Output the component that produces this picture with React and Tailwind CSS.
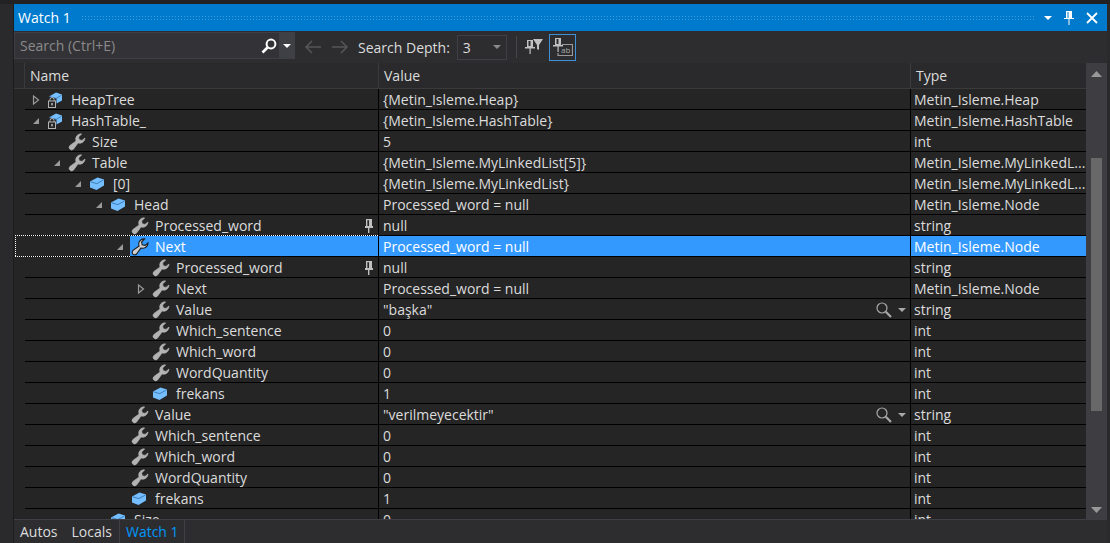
import React from 'react';

const rows = [
    { name: 'HeapTree', value: '{Metin_Isleme.Heap}', type: 'Metin_Isleme.Heap', depth: 0, icon: 'locked', arrow: 'closed' },
    { name: 'HashTable_', value: '{Metin_Isleme.HashTable}', type: 'Metin_Isleme.HashTable', depth: 0, icon: 'locked', arrow: 'open' },
    { name: 'Size', value: '5', type: 'int', depth: 1, icon: 'wrench' },
    { name: 'Table', value: '{Metin_Isleme.MyLinkedList[5]}', type: 'Metin_Isleme.MyLinkedL...', depth: 1, icon: 'wrench', arrow: 'open' },
    { name: '[0]', value: '{Metin_Isleme.MyLinkedList}', type: 'Metin_Isleme.MyLinkedL...', depth: 2, icon: 'cube', arrow: 'open' },
    { name: 'Head', value: 'Processed_word = null', type: 'Metin_Isleme.Node', depth: 3, icon: 'cube', arrow: 'open' },
    { name: 'Processed_word', value: 'null', type: 'string', depth: 4, icon: 'wrench', pin: true },
    { name: 'Next', value: 'Processed_word = null', type: 'Metin_Isleme.Node', depth: 4, icon: 'wrench', arrow: 'open', selected: true },
    { name: 'Processed_word', value: 'null', type: 'string', depth: 5, icon: 'wrench', pin: true },
    { name: 'Next', value: 'Processed_word = null', type: 'Metin_Isleme.Node', depth: 5, icon: 'wrench', arrow: 'closed' },
    { name: 'Value', value: '"başka"', type: 'string', depth: 5, icon: 'wrench', viewer: true },
    { name: 'Which_sentence', value: '0', type: 'int', depth: 5, icon: 'wrench' },
    { name: 'Which_word', value: '0', type: 'int', depth: 5, icon: 'wrench' },
    { name: 'WordQuantity', value: '0', type: 'int', depth: 5, icon: 'wrench' },
    { name: 'frekans', value: '1', type: 'int', depth: 5, icon: 'cube' },
    { name: 'Value', value: '"verilmeyecektir"', type: 'string', depth: 4, icon: 'wrench', viewer: true },
    { name: 'Which_sentence', value: '0', type: 'int', depth: 4, icon: 'wrench' },
    { name: 'Which_word', value: '0', type: 'int', depth: 4, icon: 'wrench' },
    { name: 'WordQuantity', value: '0', type: 'int', depth: 4, icon: 'wrench' },
    { name: 'frekans', value: '1', type: 'int', depth: 4, icon: 'cube' },
    { name: 'Size', value: '0', type: 'int', depth: 3, icon: 'cube' },
];

const indents = ['pl-[7px]', 'pl-[28px]', 'pl-[49px]', 'pl-[70px]', 'pl-[91px]', 'pl-[112px]'];

const Wrench = ({ selected }) => (
    <svg width="18" height="18" viewBox="0 0 18 18" className="shrink-0">
        <path
            d="M17 5a5.2 5.2 0 0 1-7 4.9L5.6 16a2.6 2.6 0 0 1-3.7.1 2.6 2.6 0 0 1 .1-3.7l6.1-4.4A5.2 5.2 0 0 1 13.6.9L10.6 4l.6 2.8 2.8.6z"
            fill={selected ? '#d0d0d0' : '#b3b3b3'}
            stroke={selected ? '#1e1e1e' : '#b3b3b3'}
            strokeWidth={selected ? 1.1 : 0.7}
        />
    </svg>
);

const Cube = () => (
    <svg width="18" height="18" viewBox="0 0 18 18" className="shrink-0">
        <path d="M1 6.5 8.5 2.5 15 4.5V10.5L7.5 15 1 12.5z" fill="#75beff" />
        <path d="M1.5 6.8 7.8 8.6 14.5 5" fill="none" stroke="#2f6ea5" strokeWidth="0.8" />
    </svg>
);

const LockedCube = () => (
    <svg width="18" height="18" viewBox="0 0 18 18" className="shrink-0">
        <path d="M2 5.5 9 1.5 15 3.5V9.5L9.5 12.5V7.5z" fill="#75beff" />
        <path d="M2.5 5.6 9.2 7.4 14.5 4.2" fill="none" stroke="#2f6ea5" strokeWidth="0.8" />
        <rect x="1.5" y="10" width="7" height="6.5" fill="#252526" stroke="#b3b3b3" strokeWidth="1" />
        <path d="M3 10V8.5a2 2 0 0 1 4 0V10" fill="none" stroke="#b3b3b3" strokeWidth="1" />
        <rect x="4.2" y="12" width="1.6" height="2.4" fill="#b3b3b3" />
    </svg>
);

const TreeArrow = ({ kind }) => {
    if (kind === 'open') {
        return (
            <svg width="8" height="8" viewBox="0 0 8 8">
                <path d="M7 1V7H1z" fill="#9a9a9a" />
            </svg>
        );
    }
    if (kind === 'closed') {
        return (
            <svg width="8" height="10" viewBox="0 0 8 10">
                <path d="M1.5 1 6.5 5 1.5 9z" fill="none" stroke="#9a9a9a" strokeWidth="1.2" />
            </svg>
        );
    }
    return null;
};

const Pin = ({ color = '#c0c0c0' }) => (
    <svg width="8" height="14" viewBox="0 0 8 14">
        <path d="M1 0h6v7h1v2H0V7h1z" fill={color} />
        <rect x="3" y="9" width="1.4" height="5" fill={color} />
        <rect x="2.4" y="1.2" width="1.6" height="5.8" fill="#252526" />
    </svg>
);

const Magnifier = ({ color = '#a8a8a8' }) => (
    <svg width="16" height="16" viewBox="0 0 16 16">
        <circle cx="6" cy="6" r="5" fill="none" stroke={color} strokeWidth="1.2" />
        <path d="M9.8 9.8 15 15" stroke={color} strokeWidth="2.2" />
    </svg>
);

const Caret = ({ color = '#a8a8a8' }) => (
    <svg width="8" height="4" viewBox="0 0 8 4">
        <path d="M0 0h8L4 4z" fill={color} />
    </svg>
);

const Row = ({ row }) => {
    const selected = row.selected;
    return (
        <div className={`relative ml-[11px] flex h-[21px] shrink-0 border-b border-black leading-[22px] ${selected ? 'bg-[#3399ff] text-white' : ''}`}>
            {selected && (
                <>
                    {/* focus rectangle round the row */}
                    <div className="absolute -left-[10px] -top-px right-[708px] h-px border-t border-dotted border-white" />
                    <div className="absolute -left-[10px] -top-px bottom-0 w-px border-l border-dotted border-white" />
                    <div className="absolute -bottom-px -left-[10px] h-px w-[115px] border-t border-dotted border-white" />
                </>
            )}
            <div className={`flex w-[353px] shrink-0 ${indents[row.depth]} ${selected ? 'bg-[#252526]' : ''}`}>
                <div className="flex w-[14px] shrink-0 items-center pt-[2px]">
                    <TreeArrow kind={row.arrow} />
                </div>
                <div className={`flex min-w-0 flex-1 items-center pl-px pt-[2px] ${selected ? 'bg-[#3399ff]' : ''}`}>
                    {row.icon === 'wrench' && <Wrench selected={selected} />}
                    {row.icon === 'cube' && <Cube />}
                    {row.icon === 'locked' && <LockedCube />}
                    <span className="ml-[6px] flex-1">{row.name}</span>
                    {row.pin && (
                        <span className="mr-[5px] flex">
                            <Pin />
                        </span>
                    )}
                </div>
            </div>
            <div className="flex w-[532px] shrink-0 items-center border-l border-black pl-[4px] pt-[2px]">
                <span className="flex-1">{row.value}</span>
                {row.viewer && (
                    <span className="mr-[4px] flex items-center gap-[6px]">
                        <Magnifier />
                        <Caret />
                    </span>
                )}
            </div>
            <div className="flex flex-1 items-center border-l border-black pl-[3px] pt-[2px] whitespace-nowrap">{row.type}</div>
        </div>
    );
};

export default function App() {
    return (
        <div className="flex h-[543px] w-[1110px] flex-col overflow-hidden bg-[#2d2d30] font-['Open_Sans','Noto_Sans',sans-serif] text-[14px] text-[#dcdcdc]">
            <div className="h-[4px] shrink-0 bg-[#222224]" />
            <div className="flex min-h-0 flex-1">
                <div className="w-[14px] shrink-0 border-r border-[#1c1c1c] bg-[#2a2a2c]" />
                <div className="flex min-w-0 flex-1 flex-col">
                    {/* Title bar */}
                    <div className="flex h-[27px] shrink-0 items-center bg-[#007acc] pl-[4px] pr-[9px] text-white">
                        <span>Watch 1</span>
                        <div className="ml-[10px] h-[6px] flex-1 bg-[radial-gradient(circle,#3f9ddb_0.8px,transparent_1px)] bg-[length:3px_3px]" />
                        <div className="ml-[10px] flex items-center">
                            <Caret color="#ffffff" />
                            <span className="ml-[12px] flex">
                                <svg width="10" height="15" viewBox="0 0 10 15">
                                    <path d="M2 1h6v7h2v1H0V8h2zM3.5 2v6h1V2zM4.5 9h1v6h-1z" fill="#ffffff" />
                                </svg>
                            </span>
                            <span className="ml-[12px] flex">
                                <svg width="12" height="12" viewBox="0 0 12 12">
                                    <path d="M1 1 11 11M11 1 1 11" stroke="#ffffff" strokeWidth="1.8" />
                                </svg>
                            </span>
                        </div>
                    </div>

                    {/* Toolbar */}
                    <div className="flex h-[32px] shrink-0 items-center pr-[9px]">
                        <div className="mb-[3px] flex h-[27px] w-[281px] shrink-0 items-center justify-between border border-[#3f3f46] bg-[#333337] pl-[5px] text-[#8a8a8a]">
                            <span>Search (Ctrl+E)</span>
                            <div className="flex h-full items-center">
                                <svg width="18" height="18" viewBox="0 0 18 18">
                                    <circle cx="11" cy="7" r="4.4" fill="none" stroke="#ffffff" strokeWidth="2" />
                                    <path d="M7.5 10.5 2.5 15.5" stroke="#ffffff" strokeWidth="2.6" />
                                </svg>
                                <div className="ml-px flex h-full w-[15px] items-center justify-center bg-[#3f3f46]">
                                    <Caret color="#ffffff" />
                                </div>
                            </div>
                        </div>
                        <svg width="18" height="14" viewBox="0 0 18 14" className="ml-[9px]">
                            <path d="M8 1 2 7 8 13M2 7H17" fill="none" stroke="#555558" strokeWidth="1.6" />
                        </svg>
                        <svg width="18" height="14" viewBox="0 0 18 14" className="ml-[9px]">
                            <path d="M10 1 16 7 10 13M16 7H1" fill="none" stroke="#555558" strokeWidth="1.6" />
                        </svg>
                        <span className="ml-[9px]">Search Depth:</span>
                        <div className="ml-[7px] flex h-[25px] w-[50px] items-center justify-between border border-[#3f3f46] pl-[5px] pr-[5px]">
                            <span>3</span>
                            <Caret color="#8a8a8a" />
                        </div>
                        <div className="ml-[9px] h-[22px] w-px bg-[#46464a]" />
                        <div className="ml-[8px] flex h-[27px] w-[22px] items-center">
                            <svg width="20" height="18" viewBox="0 0 20 18">
                                <path d="M2 2h6v7H2z" fill="#c0c0c0" />
                                <path d="M3.5 3h2v5h-2z" fill="#2d2d30" />
                                <path d="M0 9h10v1.5H0zM4.5 10h1.2v6H4.5zM8 1h10l-4 6v5l-2-1V7z" fill="#c0c0c0" />
                            </svg>
                        </div>
                        <div className="ml-[2px] flex h-[27px] w-[27px] items-center justify-center border border-[#3f8fd9]">
                            <svg width="21" height="20" viewBox="0 0 21 20">
                                <path d="M3 1h6v7H3z" fill="#c0c0c0" />
                                <path d="M4.5 2h2v5h-2z" fill="#2d2d30" />
                                <path d="M1 8h10v1.5H1zM5.5 9h1.2v6H5.5z" fill="#c0c0c0" />
                                <path d="M10 7.5h10.5v11H6V16" fill="none" stroke="#9a9a9a" strokeWidth="1.2" />
                                <text x="9" y="16" fontSize="8" fill="#a8a8a8" fontFamily="Open Sans">ab</text>
                            </svg>
                        </div>
                    </div>

                    {/* Grid and scrollbar */}
                    <div className="flex min-h-0 flex-1 border-b border-[#3f3f46]">
                        <div className="flex w-[1072px] shrink-0 flex-col bg-[#252526]">
                            <div className="flex h-[26px] shrink-0 border-b border-[#3a3a3c] bg-[#2a2a2c] pl-[10px] leading-[25px]">
                                <div className="w-[354px] shrink-0 border-l border-[#3a3a3c] pl-[5px]">Name</div>
                                <div className="w-[532px] shrink-0 border-l border-[#3a3a3c] pl-[5px]">Value</div>
                                <div className="flex-1 border-l border-[#3a3a3c] pl-[5px]">Type</div>
                            </div>
                            <div className="flex min-h-0 flex-1 flex-col overflow-hidden">
                                {rows.map((row, i) => (
                                    <Row key={i} row={row} />
                                ))}
                            </div>
                        </div>
                        <div className="flex w-[21px] shrink-0 flex-col items-center bg-[#3e3e42] pb-[6px] pt-[8px]">
                            <svg width="11" height="6" viewBox="0 0 11 6">
                                <path d="M5.5 0 11 6H0z" fill="#999999" />
                            </svg>
                            <div className="mb-[96px] mt-[81px] w-[11px] flex-1 bg-[#686868]" />
                            <svg width="11" height="6" viewBox="0 0 11 6">
                                <path d="M0 0h11L5.5 6z" fill="#999999" />
                            </svg>
                        </div>
                    </div>

                    {/* Tabs */}
                    <div className="flex h-[23px] shrink-0 items-center pl-[6px] leading-[23px]">
                        <span>Autos</span>
                        <span className="ml-[14px] mr-[7px]">Locals</span>
                        <span className="flex h-full w-[66px] items-center border-x border-[#3f3f46] pl-[6px] text-[#0097fb]">Watch 1</span>
                    </div>
                </div>
                <div className="w-[3px] shrink-0 bg-[#2a2a2c]" />
            </div>
        </div>
    );
}
